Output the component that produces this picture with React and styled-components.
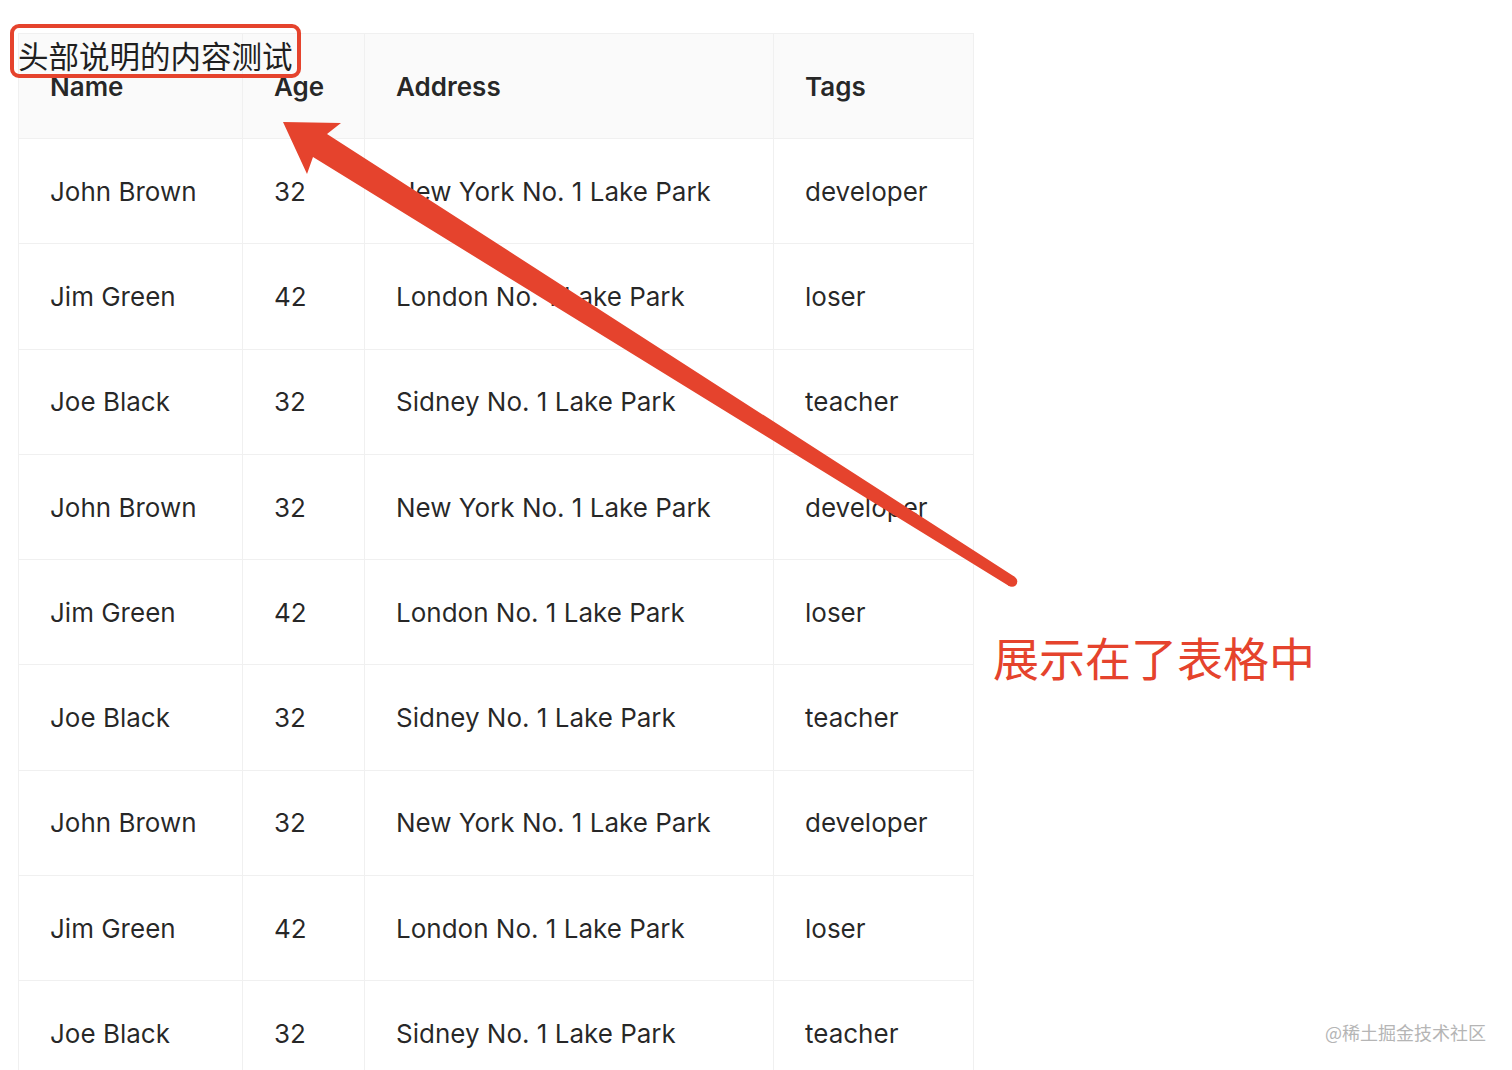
import React from "react";
import styled, { createGlobalStyle } from "styled-components";

const Global = createGlobalStyle`
  html, body { margin: 0; padding: 0; background: #fff; overflow: hidden; }
  body { font-family: Inter, "Noto Sans", "Noto Sans CJK SC", sans-serif; }
`;

const Page = styled.div`
  position: relative;
  width: 1512px;
  height: 1070px;
  overflow: hidden;
  padding: 33px 0 0 18px;
  box-sizing: border-box;
`;

const Table = styled.table`
  border-collapse: collapse;
  table-layout: fixed;
  width: 955px;
  border: 1px solid #f0f0f0;
  color: rgba(0, 0, 0, 0.85);
  font-size: 26px;
`;

const Th = styled.th`
  width: ${(p) => p.$w}px;
  height: 105px;
  box-sizing: border-box;
  padding: 0 0 0 31px;
  text-align: left;
  font-weight: 600;
  background: #fafafa;
  border: 1px solid #f0f0f0;
`;

const Td = styled.td`
  height: 105.3px;
  box-sizing: border-box;
  padding: 0 0 0 31px;
  border: 1px solid #f0f0f0;
  font-weight: 400;
`;

const Caption = styled.div`
  position: absolute;
  left: 10px;
  top: 24px;
  width: 291px;
  height: 54px;
  box-sizing: border-box;
  border: 4px solid #e5432d;
  border-radius: 9px;
  padding: 8px 0 0 4px;
  display: flex;
  align-items: center;
  font-family: "Noto Sans CJK SC", sans-serif;
  font-size: 30.5px;
  line-height: 1;
  color: #1f1f1f;
  white-space: nowrap;
`;

const Note = styled.div`
  position: absolute;
  left: 993px;
  top: 628px;
  font-family: "Noto Sans CJK SC", sans-serif;
  font-size: 46px;
  line-height: 56px;
  color: #e5432d;
  white-space: nowrap;
`;

const Mark = styled.div`
  position: absolute;
  left: 1325px;
  top: 1020px;
  font-family: "Noto Sans CJK SC", sans-serif;
  font-size: 18px;
  line-height: 24px;
  color: #b5b5b5;
  white-space: nowrap;
`;

const Arrow = styled.svg`
  position: absolute;
  left: 0;
  top: 0;
  pointer-events: none;
`;

const base = [
  ["John Brown", 32, "New York No. 1 Lake Park", "developer"],
  ["Jim Green", 42, "London No. 1 Lake Park", "loser"],
  ["Joe Black", 32, "Sidney No. 1 Lake Park", "teacher"],
];
const rows = [...base, ...base, ...base];

export default function App() {
  return (
    <Page>
      <Global />
      <Table>
        <thead>
          <tr>
            <Th $w={224}>Name</Th>
            <Th $w={122}>Age</Th>
            <Th $w={409}>Address</Th>
            <Th $w={200}>Tags</Th>
          </tr>
        </thead>
        <tbody>
          {rows.map((r, i) => (
            <tr key={i}>
              <Td>{r[0]}</Td>
              <Td>{r[1]}</Td>
              <Td>{r[2]}</Td>
              <Td>{r[3]}</Td>
            </tr>
          ))}
        </tbody>
      </Table>
      <Caption>头部说明的内容测试</Caption>
      <Arrow width="1512" height="1070" viewBox="0 0 1512 1070">
        <polygon
          fill="#e5432d"
          points="283,122 341,123 327,134 1015,577 1009,586 313,157 307,174"
        />
        <circle cx="1012" cy="581.5" r="5.3" fill="#e5432d" />
      </Arrow>
      <Note>展示在了表格中</Note>
      <Mark>@稀土掘金技术社区</Mark>
    </Page>
  );
}
